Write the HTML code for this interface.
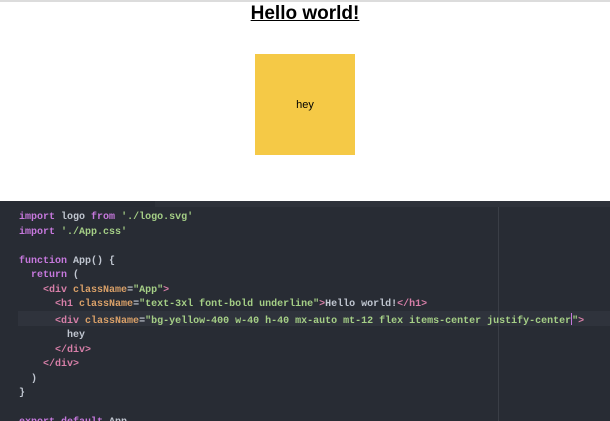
<!DOCTYPE html>
<html><head><style>
body{margin:0;width:610px;height:421px;overflow:hidden;background:#fff;font-family:"Liberation Sans",sans-serif;position:relative}
.top{position:absolute;left:0;top:0;width:610px;height:2px;background:#dcdcdc}
h1{position:absolute;top:1px;left:0;width:610px;margin:0;text-align:center;font-size:19px;line-height:26px;font-weight:bold;text-decoration:underline;color:#000}
.box{position:absolute;left:255px;top:54px;width:100px;height:101px;background:#f5c946;display:flex;align-items:center;justify-content:center;font-size:11px;color:#000}
.ed{position:absolute;left:0;top:201px;width:610px;height:220px;background:#282c34;overflow:hidden}
.strip{position:absolute;left:155px;top:0;width:455px;height:6px;background:#2e323a}
.vl{position:absolute;left:498px;top:6px;width:1px;height:220px;background:#3a3e46}
.hl{position:absolute;left:18px;top:110px;width:592px;height:15px;background:#2f333c}
pre{position:absolute;left:19px;top:10px;margin:0;font-family:"Liberation Mono",monospace;font-size:10px;line-height:14.5px;color:#c0c6d0;font-weight:bold}
.k{color:#c678dd}.s{color:#a5cf86}.t{color:#d77fa8}.a{color:#d9a068}
.cur{display:inline-block;width:1px;height:12px;background:#c678dd;vertical-align:-2px}
</style></head><body>
<div class="top"></div>
<h1>Hello world!</h1>
<div class="box">hey</div>
<div class="ed">
<div class="strip"></div>
<div class="hl"></div>
<div class="vl"></div>
<pre><span class="k">import</span> logo <span class="k">from</span> <span class="s">'./logo.svg'</span>
<span class="k">import</span> <span class="s">'./App.css'</span>

<span class="k">function</span> App() {
  <span class="k">return</span> (
    <span class="t">&lt;div</span> <span class="a">className</span>=<span class="s">"App"</span><span class="t">&gt;</span>
      <span class="t">&lt;h1</span> <span class="a">className</span>=<span class="s">"text-3xl font-bold underline"</span><span class="t">&gt;</span>Hello world!<span class="t">&lt;/h1&gt;</span>
      <span class="t">&lt;div</span> <span class="a">className</span>=<span class="s">"bg-yellow-400 w-40 h-40 mx-auto mt-12 flex items-center justify-center<span class="cur"></span>"</span><span class="t">&gt;</span>
        hey
      <span class="t">&lt;/div&gt;</span>
    <span class="t">&lt;/div&gt;</span>
  )
}

<span class="k">export</span> <span class="k">default</span> App</pre>
</div>
</body></html>
